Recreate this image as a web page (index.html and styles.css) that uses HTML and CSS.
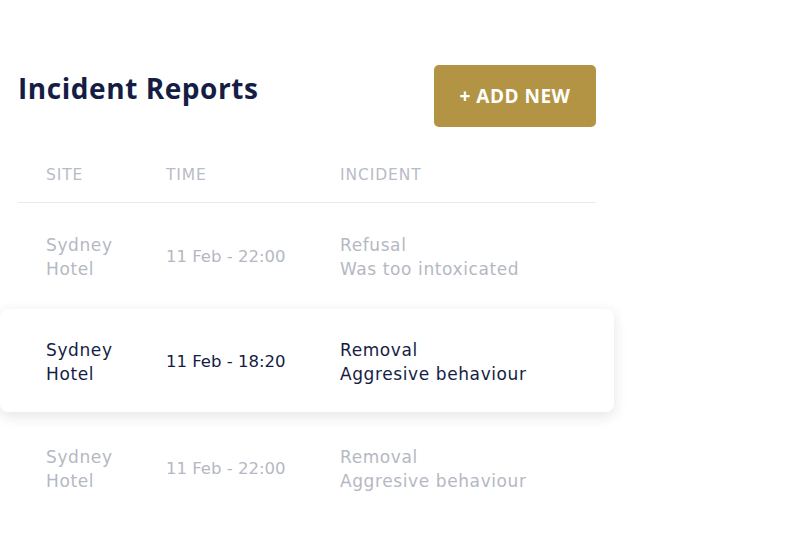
FILE: index.html
```html
<!DOCTYPE html>
<html>
<head>
<meta charset="utf-8">
<link rel="stylesheet" href="styles.css">
</head>
<body>
<div class="panel">
  <div class="top">
    <h1 class="title">Incident Reports</h1>
    <button class="add-btn">+ ADD NEW</button>
  </div>
  <div class="table">
    <div class="row head">
      <div class="c-site">SITE</div>
      <div class="c-time">TIME</div>
      <div class="c-inc">INCIDENT</div>
    </div>
    <div class="row item muted">
      <div class="c-site">Sydney<br>Hotel</div>
      <div class="c-time">11 Feb - 22:00</div>
      <div class="c-inc">Refusal<br>Was too intoxicated</div>
    </div>
    <div class="row item active">
      <div class="c-site">Sydney<br>Hotel</div>
      <div class="c-time">11 Feb - 18:20</div>
      <div class="c-inc">Removal<br>Aggresive behaviour</div>
    </div>
    <div class="row item muted">
      <div class="c-site">Sydney<br>Hotel</div>
      <div class="c-time">11 Feb - 22:00</div>
      <div class="c-inc">Removal<br>Aggresive behaviour</div>
    </div>
  </div>
</div>
</body>
</html>
```

FILE: styles.css
```css
* { box-sizing: border-box; }
html, body {
  margin: 0;
  padding: 0;
  background: #ffffff;
  width: 800px;
  height: 556px;
  overflow: hidden;
}
body {
  font-family: "DejaVu Sans", "Noto Sans", sans-serif;
  color: #151d44;
}
.panel {
  width: 578px;
  margin-left: 18px;
  padding-top: 65px;
}
.top {
  display: flex;
  justify-content: space-between;
  align-items: flex-start;
  height: 84px;
}
.title {
  margin: 4px 0 0 0;
  font-family: "Open Sans", sans-serif;
  font-size: 28px;
  font-weight: 700;
  letter-spacing: 0.55px;
  color: #151d44;
}
.add-btn {
  width: 162px;
  height: 62px;
  border: none;
  border-radius: 5px;
  background: #b39444;
  color: #ffffff;
  font-family: "Open Sans", sans-serif;
  font-weight: 700;
  font-size: 19px;
  letter-spacing: 0.5px;
  padding: 0;
}
.row {
  display: grid;
  grid-template-columns: 120px 174px 1fr;
  align-items: center;
  padding-left: 28px;
}
.head {
  height: 54px;
  border-bottom: 1px solid #e9e9ee;
  color: #b8bcc6;
  font-size: 15.5px;
  font-weight: 400;
  letter-spacing: 0.9px;
  padding-bottom: 1px;
}
.item {
  height: 106px;
  font-size: 17px;
  line-height: 24px;
  letter-spacing: 0.6px;
  padding-top: 2px;
}
.item .c-time {
  font-size: 16.5px;
  letter-spacing: 0;
}
.muted {
  color: #b5b8c2;
}
.active {
  margin: 0 -18px;
  padding-left: 46px;
  background: #ffffff;
  border-radius: 8px;
  box-shadow: 0 4px 14px rgba(20, 30, 60, 0.12);
  color: #151d44;
  height: 103px;
  margin-bottom: 3px;
}
```
